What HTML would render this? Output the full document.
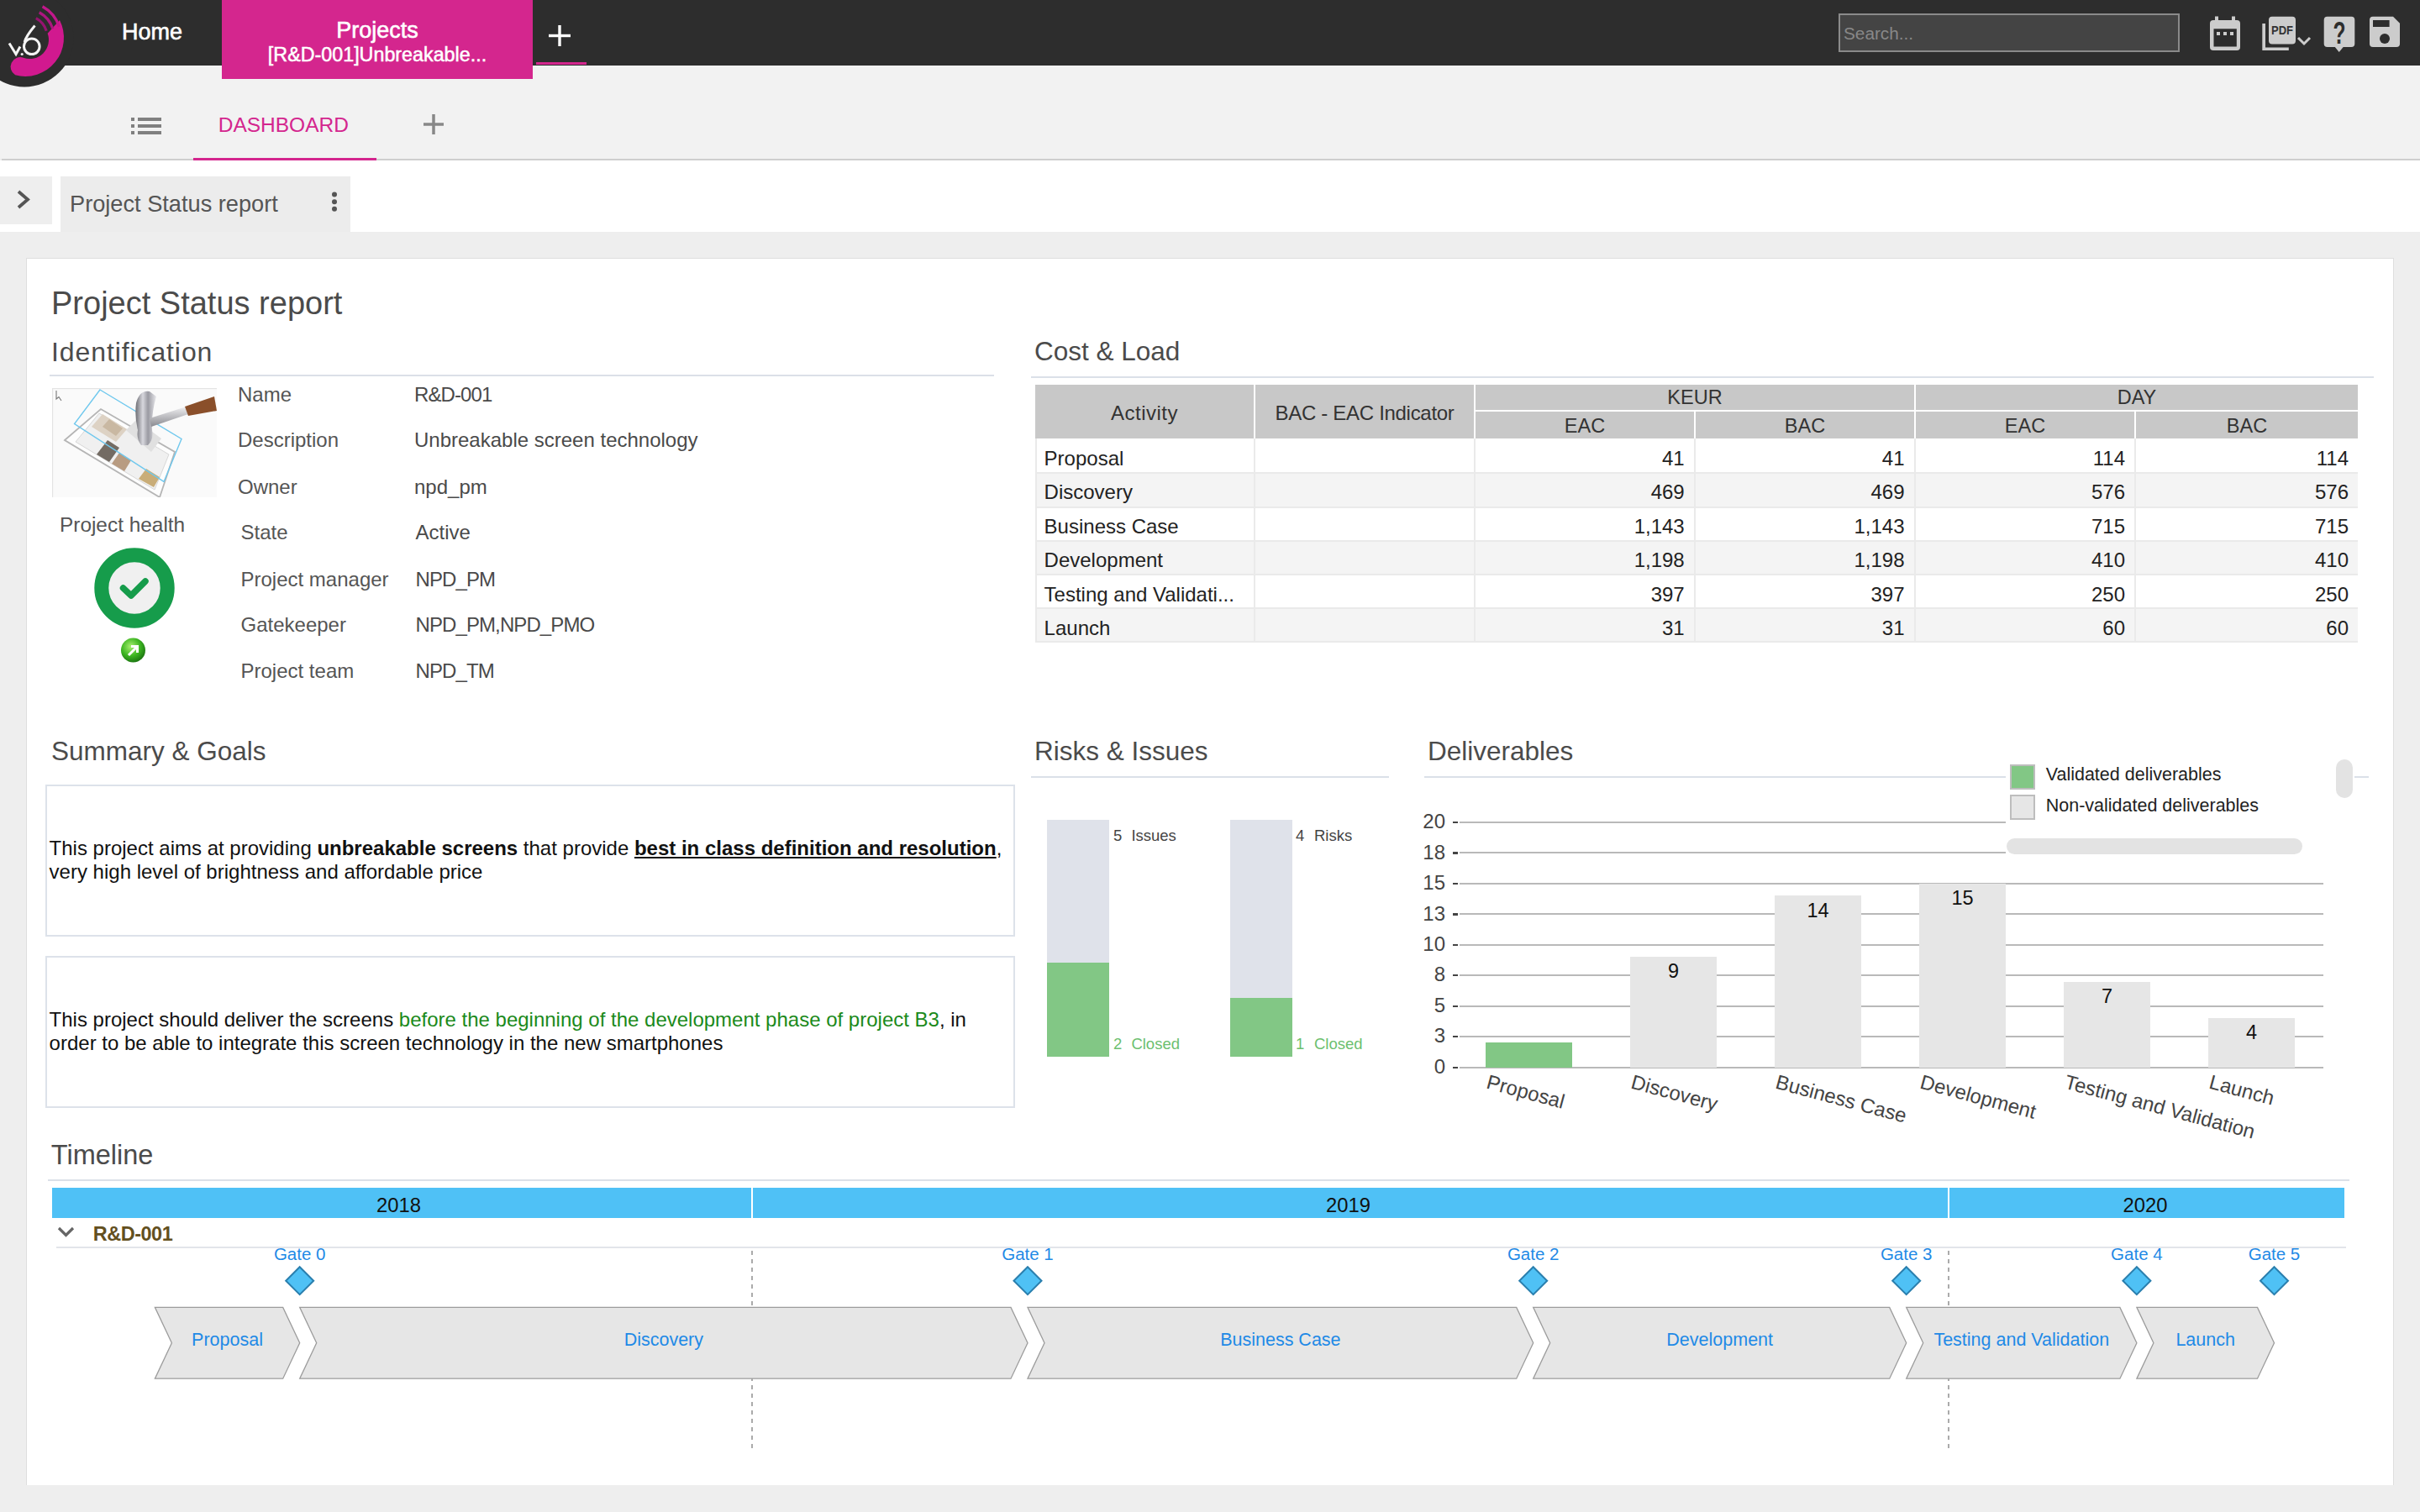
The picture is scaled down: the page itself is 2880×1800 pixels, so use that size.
<!DOCTYPE html>
<html><head><meta charset="utf-8">
<style>
*{margin:0;padding:0;box-sizing:border-box}
html,body{width:2880px;height:1800px;overflow:hidden;background:#eeeeee;font-family:"Liberation Sans",sans-serif;position:relative}
.a{position:absolute}
.t{position:absolute;white-space:nowrap;line-height:1}
.topbar{left:0;top:0;width:2880px;height:78px;background:#2d2d2d}
.subnav{left:0;top:78px;width:2880px;height:111px;background:#f2f2f2}
.strip{left:0;top:191px;width:2880px;height:85px;background:#ffffff}
.card{left:31px;top:307px;width:2818px;height:1461px;background:#fff;border:1px solid #dedede;border-bottom:none}
.h2{font-size:32px;color:#4b4b4b}
.ul{height:2px;background:#dbe0e8}
.lbl{font-size:24px;color:#555}
.val{font-size:24px;color:#444}
</style></head><body>
<!-- top bar -->
<div class="a topbar"></div>
<!-- subnav -->
<div class="a subnav"></div>
<div class="a" style="left:2px;top:189px;width:2878px;height:2px;background:#cfcfcf"></div>
<div class="a" style="left:230px;top:188px;width:218px;height:4px;background:#d4268e"></div>
<div class="t" style="left:259.7px;top:137px;font-size:24.5px;color:#d4268e">DASHBOARD</div>
<svg class="a" style="left:156px;top:140px" width="36" height="20"><g fill="#808080"><rect x="0" y="0" width="4" height="4"/><rect x="8" y="0" width="28" height="4"/><rect x="0" y="8" width="4" height="4"/><rect x="8" y="8" width="28" height="4"/><rect x="0" y="16" width="4" height="4"/><rect x="8" y="16" width="28" height="4"/></g></svg>
<svg class="a" style="left:504px;top:136px" width="24" height="24"><g fill="#888"><rect x="10.25" y="0" width="3.5" height="24"/><rect x="0" y="10.25" width="24" height="3.5"/></g></svg>

<div class="a" style="left:264px;top:0;width:370px;height:94px;background:#d4268e"></div>
<div class="t" style="left:145px;top:25px;font-size:27px;color:#fff;-webkit-text-stroke:0.6px #fff">Home</div>
<div class="t" style="left:264px;width:370px;text-align:center;top:23px;font-size:27px;color:#fff;-webkit-text-stroke:0.6px #fff">Projects</div>
<div class="t" style="left:264px;width:370px;text-align:center;top:54px;font-size:23.3px;color:#fff;-webkit-text-stroke:0.5px #fff">[R&amp;D-001]Unbreakable...</div>
<svg class="a" style="left:653px;top:30px" width="26" height="25"><g fill="#fff"><rect x="11.3" y="0" width="3.4" height="25"/><rect x="0" y="10.8" width="26" height="3.4"/></g></svg>
<div class="a" style="left:638px;top:74px;width:60px;height:2.5px;background:#d4268e"></div>
<!-- logo -->
<svg class="a" style="left:0;top:0" width="110" height="110" viewBox="0 0 110 110">
  <circle cx="29" cy="45" r="58.5" fill="#2d2d2d"/>
  <path d="M18.09 89.33 A46 46 0 0 0 70.99 24.02 L56.64 39.80 A22.5 22.5 0 0 1 27.80 68.64 A11.5 11.5 0 0 0 18.09 89.33 Z" fill="#d1198f"/>
  <path d="M50.60 7.73 A42.5 42.5 0 0 1 70.42 31.77" fill="none" stroke="#c2178b" stroke-width="3.2"/><path d="M46.73 14.73 A34.5 34.5 0 0 1 62.81 34.24" fill="none" stroke="#ad1580" stroke-width="3.2"/><path d="M42.85 21.72 A26.5 26.5 0 0 1 55.20 36.71" fill="none" stroke="#961370" stroke-width="3.2"/>
  <g fill="none" stroke="#f4f4f4" stroke-width="3">
    <circle cx="37.8" cy="55.3" r="9.3"/>
    <path d="M41.5 30.5 Q31 43 29.2 50"/>
    <path d="M11 51.5 L19 64.5 L24 55.5"/>
  </g>
  <circle cx="26.2" cy="64.5" r="1.6" fill="#f4f4f4"/>
</svg>
<!-- search -->
<div class="a" style="left:2188px;top:16px;width:406px;height:46px;background:#444;border:2px solid #8a8a8a"></div>
<div class="t" style="left:2194px;top:30px;font-size:20.75px;color:#888">Search...</div>
<!-- icons -->
<svg class="a" style="left:2620px;top:10px" width="250" height="60" viewBox="0 0 250 60">
  <g fill="#cccccc">
    <rect x="10" y="14" width="36" height="36" rx="4"/>
    <rect x="16" y="9.5" width="4" height="6"/><rect x="36" y="9.5" width="4" height="6"/>
  </g>
  <rect x="14.5" y="24.3" width="27.3" height="21.2" fill="#2d2d2d"/>
  <g fill="#cccccc"><rect x="18" y="28" width="4" height="4"/><rect x="26" y="28" width="4" height="4"/><rect x="34" y="28" width="4" height="4"/></g>
  <g fill="#cccccc">
    <path d="M72.3 18 h3.7 v28.5 h27.8 v3.5 h-31.5 z"/>
    <rect x="80" y="9.8" width="32" height="32.6" rx="4"/>
  </g>
  <text x="83" y="31" font-family="Liberation Sans" font-weight="bold" font-size="15" fill="#333" textLength="26" lengthAdjust="spacingAndGlyphs">PDF</text>
  <path d="M115 35 L122 42 L129 35" fill="none" stroke="#cccccc" stroke-width="3"/>
  <g fill="#cccccc">
    <rect x="145.7" y="9.8" width="36.6" height="36.2" rx="4"/>
    <path d="M158 45 L163.7 52 L169.5 45 z"/>
  </g>
  <text x="164" y="41.8" text-anchor="middle" font-family="Liberation Sans" font-weight="bold" font-size="37" fill="#2d2d2d" textLength="15" lengthAdjust="spacingAndGlyphs">?</text>
  <path fill="#cccccc" d="M200 13.8 a4 4 0 0 1 4 -4 h24 l8 8 v24.2 a4 4 0 0 1 -4 4 h-28 a4 4 0 0 1 -4 -4 z"/>
  <rect x="204" y="14" width="19.6" height="8" fill="#2d2d2d"/>
  <circle cx="218" cy="36" r="6" fill="#2d2d2d"/>
</svg>
<!-- strip -->
<div class="a strip"></div>
<div class="a" style="left:0;top:210px;width:62px;height:57px;background:#eeeeee"></div>
<div class="a" style="left:72px;top:210px;width:345px;height:66px;background:#ececec"></div>
<div class="t" style="left:83px;top:229px;font-size:27.2px;color:#555">Project Status report</div>
<svg class="a" style="left:18px;top:224px" width="22" height="28"><path d="M4 4 L15 13.5 L4 23" fill="none" stroke="#555" stroke-width="3.8"/></svg>
<svg class="a" style="left:392px;top:228px" width="12" height="30"><g fill="#555"><circle cx="6" cy="3.6" r="3"/><circle cx="6" cy="12.2" r="3"/><circle cx="6" cy="20.8" r="3"/></g></svg>

<!-- card -->
<div class="a card"></div>
<div class="t" style="left:61px;top:342px;font-size:38px;color:#4b4b4b">Project Status report</div>

<div class="t" style="left:61px;top:402.91px;font-size:32px;color:#4b4b4b;letter-spacing:0.9px">Identification</div>
<div class="a ul" style="left:59px;top:446px;width:1124px"></div>
<div class="t" style="left:1231px;top:403.34px;font-size:31.5px;color:#4b4b4b;">Cost &amp; Load</div>
<div class="a ul" style="left:1227px;top:448px;width:1598px"></div>
<svg class="a" style="left:62px;top:462px" width="196" height="130" viewBox="0 0 196 130">
<defs>
<linearGradient id="hm" x1="0" y1="0" x2="1" y2="0"><stop offset="0" stop-color="#6e6e74"/><stop offset="0.35" stop-color="#d8d8de"/><stop offset="0.6" stop-color="#9a9aa2"/><stop offset="1" stop-color="#e8e8ec"/></linearGradient>
<linearGradient id="hd" x1="0" y1="0" x2="0" y2="1"><stop offset="0" stop-color="#f0f0f2"/><stop offset="1" stop-color="#8a8a90"/></linearGradient>
</defs>
<rect x="0" y="0" width="196" height="130" fill="#fafafa"/>
<rect x="0" y="0" width="196" height="1.2" fill="#e4e4e4"/><rect x="0" y="0" width="1.2" height="130" fill="#e4e4e4"/>
<polygon points="15,62 58,25 146,76 128,130" fill="#fdfdfd" stroke="#b5b5b5" stroke-width="1.8"/>
<polygon points="28,64 56,30 139,79 122,121" fill="#f0f0f0" stroke="#cfcfcf" stroke-width="0.8"/>
<polygon points="47,46 60,31 89,49 76,64" fill="#ddd2c4"/><polygon points="60,46 68,37 84,48 76,57" fill="#c9b8a2"/>
<polygon points="53,79 66,62 80,71 68,88" fill="#736b63"/>
<polygon points="71,90 80,77 94,86 86,99" fill="#b89c82"/>
<polygon points="103,108 112,96 128,106 121,118" fill="#c9ad78"/>
<polygon points="88,50 100,38 130,60 118,76" fill="#e0e0e0"/>
<polygon points="57,2 154,60.5 133,111.4 26.6,42.6" fill="none" stroke="#6fc8ee" stroke-width="1.4"/>
<path d="M100 18 Q104 2 116 4 L124 10 Q118 30 119 50 Q121 62 114 68 L106 68 Q100 60 102 50 Q98 34 100 18 z" fill="url(#hm)"/>
<polygon points="116,36 160,22 162,31 118,46" fill="url(#hd)"/>
<polygon points="158,22 193,10 196,27 162,33" fill="#8a4f2a"/>
<path d="M5 3 L5 13 L8 10.5 L11 15" fill="none" stroke="#777" stroke-width="1.1"/>
</svg>
<div class="t" style="left:283px;top:457.68px;font-size:24px;color:#555;">Name</div>
<div class="t" style="left:493px;top:457.68px;font-size:24px;color:#4a4a4a;letter-spacing:-0.9px">R&amp;D-001</div>
<div class="t" style="left:283px;top:512.28px;font-size:24px;color:#555;">Description</div>
<div class="t" style="left:493px;top:512.28px;font-size:24px;color:#4a4a4a;">Unbreakable screen technology</div>
<div class="t" style="left:283px;top:567.68px;font-size:24px;color:#555;">Owner</div>
<div class="t" style="left:493px;top:567.68px;font-size:24px;color:#4a4a4a;">npd_pm</div>
<div class="t" style="left:286.5px;top:621.68px;font-size:24px;color:#555;">State</div>
<div class="t" style="left:494.5px;top:621.68px;font-size:24px;color:#4a4a4a;">Active</div>
<div class="t" style="left:286.5px;top:677.68px;font-size:24px;color:#555;">Project manager</div>
<div class="t" style="left:494.5px;top:677.68px;font-size:24px;color:#4a4a4a;letter-spacing:-0.9px">NPD_PM</div>
<div class="t" style="left:286.5px;top:731.68px;font-size:24px;color:#555;">Gatekeeper</div>
<div class="t" style="left:494.5px;top:731.68px;font-size:24px;color:#4a4a4a;letter-spacing:-0.9px">NPD_PM,NPD_PMO</div>
<div class="t" style="left:286.5px;top:787.38px;font-size:24px;color:#555;">Project team</div>
<div class="t" style="left:494.5px;top:787.38px;font-size:24px;color:#4a4a4a;letter-spacing:-0.9px">NPD_TM</div>
<div class="t" style="left:71px;top:613.35px;font-size:24.4px;color:#555;">Project health</div>
<svg class="a" style="left:110px;top:650px" width="100" height="140" viewBox="0 0 100 140">
<circle cx="50" cy="50" r="39.2" fill="#f0f0f0" stroke="#169c4b" stroke-width="17"/>
<path d="M36.5 50 L46 59 L63 42" fill="none" stroke="#169c4b" stroke-width="7.5" stroke-linecap="round" stroke-linejoin="round"/>
<defs><radialGradient id="gb" cx="40%" cy="35%" r="65%"><stop offset="0" stop-color="#a8f070"/><stop offset="0.6" stop-color="#3cb521"/><stop offset="1" stop-color="#1e7a12"/></radialGradient></defs>
<circle cx="48.5" cy="124" r="14.5" fill="url(#gb)"/>
<path d="M43 130 L53 120 M46 119.5 L53.5 119.5 L53.5 127" fill="none" stroke="#fff" stroke-width="3"/>
</svg>
<div class="a" style="left:1232px;top:458px;width:1574px;height:64px;background:#c8c8c8"></div>
<div class="a" style="left:1492px;top:458px;width:2px;height:64px;background:#fff"></div>
<div class="a" style="left:1754px;top:458px;width:2px;height:64px;background:#fff"></div>
<div class="a" style="left:2278px;top:458px;width:2px;height:64px;background:#fff"></div>
<div class="a" style="left:2016px;top:488.5px;width:2px;height:33.5px;background:#fff"></div>
<div class="a" style="left:2540px;top:488.5px;width:2px;height:33.5px;background:#fff"></div>
<div class="a" style="left:1756px;top:488px;width:1050px;height:2px;background:#fff"></div>
<div class="t" style="left:1062.00px;width:600px;text-align:center;top:479.68px;font-size:24px;color:#333;letter-spacing:0.5px">Activity</div>
<div class="t" style="left:1324.00px;width:600px;text-align:center;top:479.68px;font-size:24px;color:#333;letter-spacing:-0.3px">BAC - EAC Indicator</div>
<div class="t" style="left:1717.00px;width:600px;text-align:center;top:462.11px;font-size:23.5px;color:#333;">KEUR</div>
<div class="t" style="left:2243.00px;width:600px;text-align:center;top:462.11px;font-size:23.5px;color:#333;">DAY</div>
<div class="t" style="left:1586.00px;width:600px;text-align:center;top:495.91px;font-size:23.5px;color:#333;">EAC</div>
<div class="t" style="left:1848.00px;width:600px;text-align:center;top:495.91px;font-size:23.5px;color:#333;">BAC</div>
<div class="t" style="left:2110.00px;width:600px;text-align:center;top:495.91px;font-size:23.5px;color:#333;">EAC</div>
<div class="t" style="left:2374.00px;width:600px;text-align:center;top:495.91px;font-size:23.5px;color:#333;">BAC</div>
<div class="a" style="left:1232px;top:522px;width:1574px;height:42px;background:#ffffff;border-bottom:2px solid #eaeaea"></div>
<div class="a" style="left:1232px;top:564px;width:1574px;height:41px;background:#f4f4f4;border-bottom:2px solid #eaeaea"></div>
<div class="a" style="left:1232px;top:605px;width:1574px;height:39.5px;background:#ffffff;border-bottom:2px solid #eaeaea"></div>
<div class="a" style="left:1232px;top:644.5px;width:1574px;height:40.5px;background:#f4f4f4;border-bottom:2px solid #eaeaea"></div>
<div class="a" style="left:1232px;top:685px;width:1574px;height:39.5px;background:#ffffff;border-bottom:2px solid #eaeaea"></div>
<div class="a" style="left:1232px;top:724.5px;width:1574px;height:40.5px;background:#f4f4f4;border-bottom:2px solid #eaeaea"></div>
<div class="a" style="left:1232px;top:522px;width:2px;height:243px;background:#eaeaea"></div>
<div class="a" style="left:1492px;top:522px;width:2px;height:243px;background:#eaeaea"></div>
<div class="a" style="left:1754px;top:522px;width:2px;height:243px;background:#eaeaea"></div>
<div class="a" style="left:2016px;top:522px;width:2px;height:243px;background:#eaeaea"></div>
<div class="a" style="left:2278px;top:522px;width:2px;height:243px;background:#eaeaea"></div>
<div class="a" style="left:2540px;top:522px;width:2px;height:243px;background:#eaeaea"></div>
<div class="t" style="left:1242.6px;top:533.68px;font-size:24px;color:#222;">Proposal</div>
<div class="t" style="left:1604.70px;width:400px;text-align:right;top:533.68px;font-size:24px;color:#222;">41</div>
<div class="t" style="left:1866.50px;width:400px;text-align:right;top:533.68px;font-size:24px;color:#222;">41</div>
<div class="t" style="left:2129.00px;width:400px;text-align:right;top:533.68px;font-size:24px;color:#222;">114</div>
<div class="t" style="left:2395.00px;width:400px;text-align:right;top:533.68px;font-size:24px;color:#222;">114</div>
<div class="t" style="left:1242.6px;top:574.18px;font-size:24px;color:#222;">Discovery</div>
<div class="t" style="left:1604.70px;width:400px;text-align:right;top:574.18px;font-size:24px;color:#222;">469</div>
<div class="t" style="left:1866.50px;width:400px;text-align:right;top:574.18px;font-size:24px;color:#222;">469</div>
<div class="t" style="left:2129.00px;width:400px;text-align:right;top:574.18px;font-size:24px;color:#222;">576</div>
<div class="t" style="left:2395.00px;width:400px;text-align:right;top:574.18px;font-size:24px;color:#222;">576</div>
<div class="t" style="left:1242.6px;top:614.68px;font-size:24px;color:#222;">Business Case</div>
<div class="t" style="left:1604.70px;width:400px;text-align:right;top:614.68px;font-size:24px;color:#222;">1,143</div>
<div class="t" style="left:1866.50px;width:400px;text-align:right;top:614.68px;font-size:24px;color:#222;">1,143</div>
<div class="t" style="left:2129.00px;width:400px;text-align:right;top:614.68px;font-size:24px;color:#222;">715</div>
<div class="t" style="left:2395.00px;width:400px;text-align:right;top:614.68px;font-size:24px;color:#222;">715</div>
<div class="t" style="left:1242.6px;top:655.18px;font-size:24px;color:#222;">Development</div>
<div class="t" style="left:1604.70px;width:400px;text-align:right;top:655.18px;font-size:24px;color:#222;">1,198</div>
<div class="t" style="left:1866.50px;width:400px;text-align:right;top:655.18px;font-size:24px;color:#222;">1,198</div>
<div class="t" style="left:2129.00px;width:400px;text-align:right;top:655.18px;font-size:24px;color:#222;">410</div>
<div class="t" style="left:2395.00px;width:400px;text-align:right;top:655.18px;font-size:24px;color:#222;">410</div>
<div class="t" style="left:1242.6px;top:695.68px;font-size:24px;color:#222;">Testing and Validati...</div>
<div class="t" style="left:1604.70px;width:400px;text-align:right;top:695.68px;font-size:24px;color:#222;">397</div>
<div class="t" style="left:1866.50px;width:400px;text-align:right;top:695.68px;font-size:24px;color:#222;">397</div>
<div class="t" style="left:2129.00px;width:400px;text-align:right;top:695.68px;font-size:24px;color:#222;">250</div>
<div class="t" style="left:2395.00px;width:400px;text-align:right;top:695.68px;font-size:24px;color:#222;">250</div>
<div class="t" style="left:1242.6px;top:736.18px;font-size:24px;color:#222;">Launch</div>
<div class="t" style="left:1604.70px;width:400px;text-align:right;top:736.18px;font-size:24px;color:#222;">31</div>
<div class="t" style="left:1866.50px;width:400px;text-align:right;top:736.18px;font-size:24px;color:#222;">31</div>
<div class="t" style="left:2129.00px;width:400px;text-align:right;top:736.18px;font-size:24px;color:#222;">60</div>
<div class="t" style="left:2395.00px;width:400px;text-align:right;top:736.18px;font-size:24px;color:#222;">60</div>
<div class="t" style="left:61px;top:879.34px;font-size:31.5px;color:#4b4b4b;">Summary &amp; Goals</div>
<div class="a" style="left:54px;top:934px;width:1154px;height:181px;border:2px solid #dde2ea"></div>
<div class="a" style="left:54px;top:1138px;width:1154px;height:181px;border:2px solid #dde2ea"></div>
<div class="t" style="left:58.6px;top:998.18px;font-size:24px;color:#111;">This project aims at providing <b>unbreakable screens</b> that provide <b><u>best in class definition and resolution</u></b>,</div>
<div class="t" style="left:58.6px;top:1026.18px;font-size:24px;color:#111;">very high level of brightness and affordable price</div>
<div class="t" style="left:58.6px;top:1201.68px;font-size:24px;color:#111;">This project should deliver the screens <span style="color:#1b8a1b">before the beginning of the development phase of project B3</span>, in</div>
<div class="t" style="left:58.6px;top:1229.68px;font-size:24px;color:#111;">order to be able to integrate this screen technology in the new smartphones</div>
<div class="t" style="left:1231px;top:879.14px;font-size:31.5px;color:#4b4b4b;">Risks &amp; Issues</div>
<div class="a ul" style="left:1227px;top:924px;width:426px"></div>
<div class="a" style="left:1246px;top:976px;width:74px;height:170px;background:#dfe2ea"></div>
<div class="a" style="left:1246px;top:1145.6px;width:74px;height:112.2px;background:#82c785"></div>
<div class="a" style="left:1464px;top:976px;width:74px;height:212px;background:#dfe2ea"></div>
<div class="a" style="left:1464px;top:1187.8px;width:74px;height:70px;background:#82c785"></div>
<div class="t" style="left:1325px;top:986.34px;font-size:18.5px;color:#444;">5</div>
<div class="t" style="left:1346.4px;top:986.34px;font-size:18.5px;color:#444;">Issues</div>
<div class="t" style="left:1325px;top:1234.34px;font-size:18.5px;color:#6cbf6f;">2</div>
<div class="t" style="left:1346.4px;top:1234.34px;font-size:18.5px;color:#6cbf6f;">Closed</div>
<div class="t" style="left:1542px;top:986.34px;font-size:18.5px;color:#444;">4</div>
<div class="t" style="left:1564px;top:986.34px;font-size:18.5px;color:#444;">Risks</div>
<div class="t" style="left:1542px;top:1234.34px;font-size:18.5px;color:#6cbf6f;">1</div>
<div class="t" style="left:1564px;top:1234.34px;font-size:18.5px;color:#6cbf6f;">Closed</div>
<div class="t" style="left:1699px;top:879.34px;font-size:31.5px;color:#4b4b4b;">Deliverables</div>
<div class="a ul" style="left:1695px;top:924px;width:1124px"></div>
<div class="a" style="left:1737px;top:1269.60px;width:1028px;height:2px;background:#b9b9b9"></div>
<div class="t" style="left:1320.00px;width:400px;text-align:right;top:1257.78px;font-size:24px;color:#444;">0</div>
<div class="a" style="left:1729px;top:1269.60px;width:6px;height:2.2px;background:#444"></div>
<div class="a" style="left:1737px;top:1233.15px;width:1028px;height:2px;background:#b9b9b9"></div>
<div class="t" style="left:1320.00px;width:400px;text-align:right;top:1221.33px;font-size:24px;color:#444;">3</div>
<div class="a" style="left:1729px;top:1233.15px;width:6px;height:2.2px;background:#444"></div>
<div class="a" style="left:1737px;top:1196.70px;width:1028px;height:2px;background:#b9b9b9"></div>
<div class="t" style="left:1320.00px;width:400px;text-align:right;top:1184.88px;font-size:24px;color:#444;">5</div>
<div class="a" style="left:1729px;top:1196.70px;width:6px;height:2.2px;background:#444"></div>
<div class="a" style="left:1737px;top:1160.25px;width:1028px;height:2px;background:#b9b9b9"></div>
<div class="t" style="left:1320.00px;width:400px;text-align:right;top:1148.43px;font-size:24px;color:#444;">8</div>
<div class="a" style="left:1729px;top:1160.25px;width:6px;height:2.2px;background:#444"></div>
<div class="a" style="left:1737px;top:1123.80px;width:1028px;height:2px;background:#b9b9b9"></div>
<div class="t" style="left:1320.00px;width:400px;text-align:right;top:1111.98px;font-size:24px;color:#444;">10</div>
<div class="a" style="left:1729px;top:1123.80px;width:6px;height:2.2px;background:#444"></div>
<div class="a" style="left:1737px;top:1087.35px;width:1028px;height:2px;background:#b9b9b9"></div>
<div class="t" style="left:1320.00px;width:400px;text-align:right;top:1075.53px;font-size:24px;color:#444;">13</div>
<div class="a" style="left:1729px;top:1087.35px;width:6px;height:2.2px;background:#444"></div>
<div class="a" style="left:1737px;top:1050.90px;width:1028px;height:2px;background:#b9b9b9"></div>
<div class="t" style="left:1320.00px;width:400px;text-align:right;top:1039.08px;font-size:24px;color:#444;">15</div>
<div class="a" style="left:1729px;top:1050.90px;width:6px;height:2.2px;background:#444"></div>
<div class="a" style="left:1737px;top:1014.45px;width:1028px;height:2px;background:#b9b9b9"></div>
<div class="t" style="left:1320.00px;width:400px;text-align:right;top:1002.63px;font-size:24px;color:#444;">18</div>
<div class="a" style="left:1729px;top:1014.45px;width:6px;height:2.2px;background:#444"></div>
<div class="a" style="left:1737px;top:978.00px;width:1028px;height:2px;background:#b9b9b9"></div>
<div class="t" style="left:1320.00px;width:400px;text-align:right;top:966.18px;font-size:24px;color:#444;">20</div>
<div class="a" style="left:1729px;top:978.00px;width:6px;height:2.2px;background:#444"></div>
<div class="a" style="left:1768px;top:1241.44px;width:103px;height:29.16px;background:#82c785"></div>
<div class="t" style="left:1773px;top:1276px;font-size:24px;color:#444;transform-origin:0 0;transform:rotate(15deg)">Proposal</div>
<div class="a" style="left:1940px;top:1139.38px;width:103px;height:131.22px;background:#e6e6e6"></div>
<div class="t" style="left:1941.50px;width:100px;text-align:center;top:1145.49px;font-size:23.5px;color:#111;">9</div>
<div class="t" style="left:1945px;top:1276px;font-size:24px;color:#444;transform-origin:0 0;transform:rotate(15deg)">Discovery</div>
<div class="a" style="left:2112px;top:1066.48px;width:103px;height:204.12px;background:#e6e6e6"></div>
<div class="t" style="left:2113.50px;width:100px;text-align:center;top:1072.59px;font-size:23.5px;color:#111;">14</div>
<div class="t" style="left:2117px;top:1276px;font-size:24px;color:#444;transform-origin:0 0;transform:rotate(15deg)">Business Case</div>
<div class="a" style="left:2284px;top:1051.90px;width:103px;height:218.70px;background:#e6e6e6"></div>
<div class="t" style="left:2285.50px;width:100px;text-align:center;top:1058.01px;font-size:23.5px;color:#111;">15</div>
<div class="t" style="left:2289px;top:1276px;font-size:24px;color:#444;transform-origin:0 0;transform:rotate(15deg)">Development</div>
<div class="a" style="left:2456px;top:1168.54px;width:103px;height:102.06px;background:#e6e6e6"></div>
<div class="t" style="left:2457.50px;width:100px;text-align:center;top:1174.65px;font-size:23.5px;color:#111;">7</div>
<div class="t" style="left:2461px;top:1276px;font-size:24px;color:#444;transform-origin:0 0;transform:rotate(15deg)">Testing and Validation</div>
<div class="a" style="left:2628px;top:1212.28px;width:103px;height:58.32px;background:#e6e6e6"></div>
<div class="t" style="left:2629.50px;width:100px;text-align:center;top:1218.39px;font-size:23.5px;color:#111;">4</div>
<div class="t" style="left:2633px;top:1276px;font-size:24px;color:#444;transform-origin:0 0;transform:rotate(15deg)">Launch</div>
<div class="a" style="left:2387px;top:900px;width:415px;height:125px;background:#fff"></div>
<div class="a" style="left:2392px;top:910.4px;width:29.5px;height:29.5px;background:#82c785;border:2px solid #bdbdbd"></div>
<div class="a" style="left:2392px;top:946px;width:29.5px;height:29.5px;background:#e6e6e6;border:2px solid #bdbdbd"></div>
<div class="t" style="left:2434.7px;top:911.80px;font-size:21.5px;color:#222;">Validated deliverables</div>
<div class="t" style="left:2434.7px;top:948.50px;font-size:21.5px;color:#222;">Non-validated deliverables</div>
<div class="a" style="left:2388px;top:998px;width:352px;height:19px;background:#e3e3e3;border-radius:10px"></div>
<div class="a" style="left:2780px;top:904px;width:20px;height:46px;background:#e3e3e3;border-radius:10px"></div>
<div class="a" style="left:2802px;top:924px;width:17px;height:2px;background:#dbe0e8"></div>
<div class="t" style="left:60.8px;top:1359.14px;font-size:32.5px;color:#4b4b4b;">Timeline</div>
<div class="a ul" style="left:57px;top:1404px;width:2739px"></div>
<div class="a" style="left:62px;top:1414px;width:2728px;height:36px;background:#4fc1f6"></div>
<div class="a" style="left:894px;top:1414px;width:2px;height:36px;background:#fff"></div>
<div class="a" style="left:2317.6px;top:1414px;width:2px;height:36px;background:#fff"></div>
<div class="t" style="left:374.50px;width:200px;text-align:center;top:1422.85px;font-size:23.8px;color:#111;">2018</div>
<div class="t" style="left:1504.50px;width:200px;text-align:center;top:1422.85px;font-size:23.8px;color:#111;">2019</div>
<div class="t" style="left:2453.00px;width:200px;text-align:center;top:1422.85px;font-size:23.8px;color:#111;">2020</div>
<svg class="a" style="left:67px;top:1458px" width="24" height="18"><path d="M3 4 L11.5 12.5 L20 4" fill="none" stroke="#666" stroke-width="3.2"/></svg>
<div class="t" style="left:110.8px;top:1457.81px;font-size:23.5px;color:#63501f;font-weight:bold;letter-spacing:-0.5px">R&amp;D-001</div>
<div class="a" style="left:67px;top:1484px;width:2725px;height:2px;background:#e2e5ea"></div>
<svg class="a" style="left:894px;top:1489px" width="2" height="235"><line x1="1" y1="0" x2="1" y2="235" stroke="#ababab" stroke-width="2" stroke-dasharray="5 5"/></svg>
<svg class="a" style="left:2317.6px;top:1489px" width="2" height="235"><line x1="1" y1="0" x2="1" y2="235" stroke="#ababab" stroke-width="2" stroke-dasharray="5 5"/></svg>
<svg class="a" style="left:0;top:1540px" width="2880" height="120" viewBox="0 1540 2880 120"><polygon points="184.4,1556.4 336.7,1556.4 356.7,1598.8 336.7,1641.2 184.4,1641.2 204.4,1598.8" fill="#e6e6e6" stroke="#9c9c9c" stroke-width="1.3"/><polygon points="356.7,1556.4 1203,1556.4 1223,1598.8 1203,1641.2 356.7,1641.2 376.7,1598.8" fill="#e6e6e6" stroke="#9c9c9c" stroke-width="1.3"/><polygon points="1223,1556.4 1804.7,1556.4 1824.7,1598.8 1804.7,1641.2 1223,1641.2 1243,1598.8" fill="#e6e6e6" stroke="#9c9c9c" stroke-width="1.3"/><polygon points="1824.7,1556.4 2248.7,1556.4 2268.7,1598.8 2248.7,1641.2 1824.7,1641.2 1844.7,1598.8" fill="#e6e6e6" stroke="#9c9c9c" stroke-width="1.3"/><polygon points="2268.7,1556.4 2522.9,1556.4 2542.9,1598.8 2522.9,1641.2 2268.7,1641.2 2288.7,1598.8" fill="#e6e6e6" stroke="#9c9c9c" stroke-width="1.3"/><polygon points="2542.9,1556.4 2686.5,1556.4 2706.5,1598.8 2686.5,1641.2 2542.9,1641.2 2562.9,1598.8" fill="#e6e6e6" stroke="#9c9c9c" stroke-width="1.3"/></svg>
<div class="t" style="left:70.55px;width:400px;text-align:center;top:1585.30px;font-size:21.5px;color:#1f8ae6;">Proposal</div>
<div class="t" style="left:589.85px;width:400px;text-align:center;top:1585.30px;font-size:21.5px;color:#1f8ae6;">Discovery</div>
<div class="t" style="left:1323.85px;width:400px;text-align:center;top:1585.30px;font-size:21.5px;color:#1f8ae6;">Business Case</div>
<div class="t" style="left:1846.70px;width:400px;text-align:center;top:1585.30px;font-size:21.5px;color:#1f8ae6;">Development</div>
<div class="t" style="left:2205.80px;width:400px;text-align:center;top:1585.30px;font-size:21.5px;color:#1f8ae6;">Testing and Validation</div>
<div class="t" style="left:2424.70px;width:400px;text-align:center;top:1585.30px;font-size:21.5px;color:#1f8ae6;">Launch</div>
<svg class="a" style="left:0;top:1500px" width="2880" height="50" viewBox="0 1500 2880 50"><polygon points="356.7,1508.2 373.2,1524.7 356.7,1541.2 340.2,1524.7" fill="#4fc1f5" stroke="#2a7fae" stroke-width="2"/><polygon points="1223,1508.2 1239.5,1524.7 1223,1541.2 1206.5,1524.7" fill="#4fc1f5" stroke="#2a7fae" stroke-width="2"/><polygon points="1824.7,1508.2 1841.2,1524.7 1824.7,1541.2 1808.2,1524.7" fill="#4fc1f5" stroke="#2a7fae" stroke-width="2"/><polygon points="2268.7,1508.2 2285.2,1524.7 2268.7,1541.2 2252.2,1524.7" fill="#4fc1f5" stroke="#2a7fae" stroke-width="2"/><polygon points="2542.9,1508.2 2559.4,1524.7 2542.9,1541.2 2526.4,1524.7" fill="#4fc1f5" stroke="#2a7fae" stroke-width="2"/><polygon points="2706.5,1508.2 2723.0,1524.7 2706.5,1541.2 2690.0,1524.7" fill="#4fc1f5" stroke="#2a7fae" stroke-width="2"/></svg>
<div class="t" style="left:256.70px;width:200px;text-align:center;top:1482.65px;font-size:20.5px;color:#1f8ae6;">Gate 0</div>
<div class="t" style="left:1123.00px;width:200px;text-align:center;top:1482.65px;font-size:20.5px;color:#1f8ae6;">Gate 1</div>
<div class="t" style="left:1724.70px;width:200px;text-align:center;top:1482.65px;font-size:20.5px;color:#1f8ae6;">Gate 2</div>
<div class="t" style="left:2168.70px;width:200px;text-align:center;top:1482.65px;font-size:20.5px;color:#1f8ae6;">Gate 3</div>
<div class="t" style="left:2442.90px;width:200px;text-align:center;top:1482.65px;font-size:20.5px;color:#1f8ae6;">Gate 4</div>
<div class="t" style="left:2606.50px;width:200px;text-align:center;top:1482.65px;font-size:20.5px;color:#1f8ae6;">Gate 5</div>
</body></html>
